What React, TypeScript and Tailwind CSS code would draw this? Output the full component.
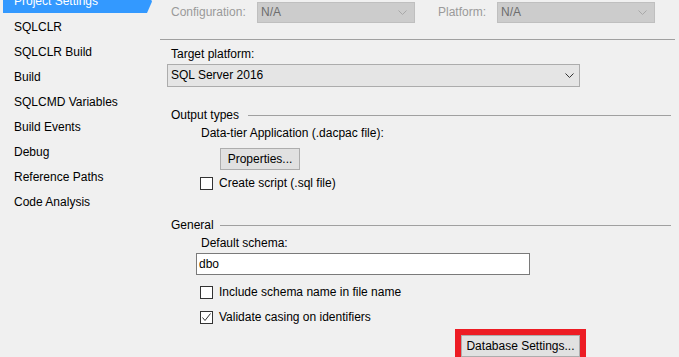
import type { ReactNode } from "react"

const navItems = [
  "SQLCLR",
  "SQLCLR Build",
  "Build",
  "SQLCMD Variables",
  "Build Events",
  "Debug",
  "Reference Paths",
  "Code Analysis",
]

function Chevron({ color }: { color: string }) {
  return (
    <svg width="9" height="5" viewBox="0 0 9 5" className="shrink-0">
      <polyline points="0.5,0.5 4.5,4.5 8.5,0.5" fill="none" stroke={color} strokeWidth="1" />
    </svg>
  )
}

function DisabledCombo() {
  return (
    <div className="flex h-[21px] w-[158px] items-center justify-between border border-[#bfbfbf] bg-[#cccccc] pl-[3px] pr-[7px] text-[#6d6d6d]">
      <span>N/A</span>
      <Chevron color="#a8a8a8" />
    </div>
  )
}

function GroupHeader({ label, width }: { label: string; width: string }) {
  return (
    <div className="ml-[11px] mr-[8px] flex h-[15px] items-center">
      <span className={width}>{label}</span>
      <div className="h-px flex-1 bg-[#a0a0a0]" />
    </div>
  )
}

function CheckRow({ checked, children, className }: { checked?: boolean; children: ReactNode; className: string }) {
  return (
    <div className={`ml-[40px] flex h-[15px] items-center gap-[6px] ${className}`}>
      <div className="flex h-[13px] w-[13px] items-center justify-center border border-[#333333] bg-white">
        {checked && (
          <svg width="11" height="11" viewBox="0 0 11 11">
            <polyline points="1.5,5.5 4,8.5 9.5,1.5" fill="none" stroke="#333333" strokeWidth="1" />
          </svg>
        )}
      </div>
      <span>{children}</span>
    </div>
  )
}

export default function App() {
  return (
    <div className="flex h-[357px] w-[679px] overflow-hidden bg-[#f0f0f0] font-['Liberation_Sans',Arial,sans-serif] text-[12px] leading-[15px] text-black">
      {/* Liste de gauche */}
      <div className="w-[160px] shrink-0">
        <div className="-mt-[10px] ml-[3px] flex h-[23px] w-[149px] items-center bg-[#3399ff] pl-[11px] text-white [clip-path:polygon(0_0,144px_0,149px_50%,144px_100%,0_100%)]">
          Project Settings
        </div>
        <div className="mt-[2px]">
          {navItems.map((item) => (
            <div key={item} className="flex h-[25px] items-center pl-[14px]">
              {item}
            </div>
          ))}
        </div>
      </div>

      {/* Zone principale */}
      <div className="flex-1">
        <div className="ml-[11px] mt-[2px] flex h-[21px] items-center">
          <span className="w-[86px] text-[#9a9a9a]">Configuration:</span>
          <DisabledCombo />
          <span className="ml-[23px] w-[59px] text-[#9a9a9a]">Platform:</span>
          <DisabledCombo />
        </div>

        <div className="mr-[4px] mt-[16px] h-px bg-[#a0a0a0]" />

        <div className="ml-[11px] mt-[7px]">Target platform:</div>
        <div className="ml-[7px] mt-[2px] flex h-[23px] w-[413px] items-center justify-between border border-[#acacac] bg-[#e5e5e5] pl-[3px] pr-[5px]">
          <span>SQL Server 2016</span>
          <Chevron color="#333333" />
        </div>

        <div className="mt-[21px]">
          <GroupHeader label="Output types" width="w-[77px]" />
        </div>
        <div className="ml-[41px] mt-[3px]">Data-tier Application (.dacpac file):</div>
        <button className="ml-[60px] mt-[7px] flex h-[22px] w-[80px] items-center justify-center border border-[#adadad] bg-[#e1e1e1]">
          Properties...
        </button>
        <CheckRow className="mt-[6px]">Create script (.sql file)</CheckRow>

        <div className="mt-[27px]">
          <GroupHeader label="General" width="w-[49px]" />
        </div>
        <div className="ml-[41px] mt-[3px]">Default schema:</div>
        <div className="ml-[36px] mt-[2px] flex h-[22px] w-[334px] items-center border border-[#7a7a7a] bg-white pl-[2px]">
          dbo
        </div>
        <CheckRow className="mt-[10px]">Include schema name in file name</CheckRow>
        <CheckRow checked className="mt-[10px]">
          Validate casing on identifiers
        </CheckRow>

        <div className="ml-[295px] mt-[4px] w-[131px] border-[6px] border-[#ed1c24]">
          <button className="flex h-[22px] w-full items-center justify-center border border-[#adadad] bg-[#e1e1e1]">
            Database Settings...
          </button>
        </div>
      </div>
    </div>
  )
}
